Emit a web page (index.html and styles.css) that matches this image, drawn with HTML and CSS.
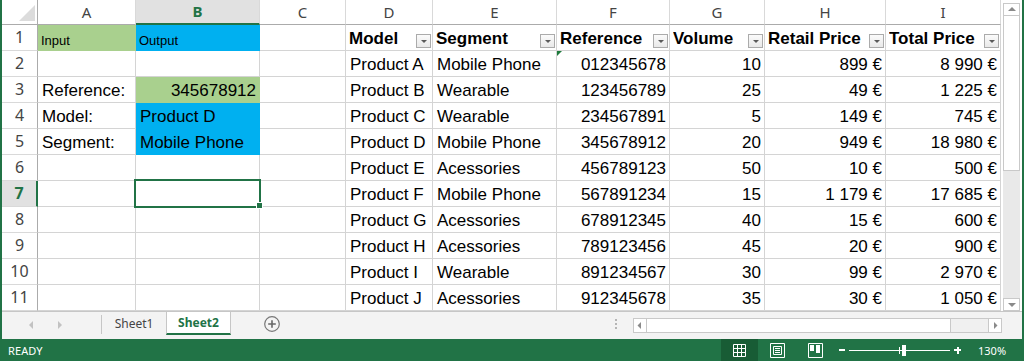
FILE: index.html
```html
<!DOCTYPE html>
<html lang="en">
<head>
<meta charset="utf-8">
<title>Sheet2 - Excel</title>
<link rel="stylesheet" href="styles.css">
</head>
<body>
<div class="app">
  <div class="main">
    <div class="grid">
      <div class="corner"><svg width="36" height="24" viewBox="0 0 36 24"><polygon points="17,21 33,5 33,21" fill="#dcdcdc"/></svg></div>
      <div class="ch">A</div><div class="ch csel">B</div><div class="ch">C</div><div class="ch">D</div><div class="ch">E</div><div class="ch">F</div><div class="ch">G</div><div class="ch">H</div><div class="ch">I</div>

      <div class="rh">1</div><div class="c g sm">Input</div><div class="c bl sm">Output</div><div class="c"></div>
      <div class="c th"><span>Model</span><i class="dd"></i></div><div class="c th"><span>Segment</span><i class="dd"></i></div><div class="c th"><span>Reference</span><i class="dd"></i></div><div class="c th"><span>Volume</span><i class="dd"></i></div><div class="c th"><span>Retail Price</span><i class="dd"></i></div><div class="c th"><span>Total Price</span><i class="dd"></i></div>

      <div class="rh">2</div><div class="c"></div><div class="c"></div><div class="c"></div>
      <div class="c">Product A</div><div class="c">Mobile Phone</div><div class="c r flag">012345678</div><div class="c r">10</div><div class="c r">899 €</div><div class="c r">8 990 €</div>

      <div class="rh">3</div><div class="c">Reference:</div><div class="c g r">345678912</div><div class="c"></div>
      <div class="c">Product B</div><div class="c">Wearable</div><div class="c r">123456789</div><div class="c r">25</div><div class="c r">49 €</div><div class="c r">1 225 €</div>

      <div class="rh">4</div><div class="c">Model:</div><div class="c bl">Product D</div><div class="c"></div>
      <div class="c">Product C</div><div class="c">Wearable</div><div class="c r">234567891</div><div class="c r">5</div><div class="c r">149 €</div><div class="c r">745 €</div>

      <div class="rh">5</div><div class="c">Segment:</div><div class="c bl">Mobile Phone</div><div class="c"></div>
      <div class="c">Product D</div><div class="c">Mobile Phone</div><div class="c r">345678912</div><div class="c r">20</div><div class="c r">949 €</div><div class="c r">18 980 €</div>

      <div class="rh">6</div><div class="c"></div><div class="c"></div><div class="c"></div>
      <div class="c">Product E</div><div class="c">Acessories</div><div class="c r">456789123</div><div class="c r">50</div><div class="c r">10 €</div><div class="c r">500 €</div>

      <div class="rh rsel">7</div><div class="c"></div><div class="c"></div><div class="c"></div>
      <div class="c">Product F</div><div class="c">Mobile Phone</div><div class="c r">567891234</div><div class="c r">15</div><div class="c r">1 179 €</div><div class="c r">17 685 €</div>

      <div class="rh">8</div><div class="c"></div><div class="c"></div><div class="c"></div>
      <div class="c">Product G</div><div class="c">Acessories</div><div class="c r">678912345</div><div class="c r">40</div><div class="c r">15 €</div><div class="c r">600 €</div>

      <div class="rh">9</div><div class="c"></div><div class="c"></div><div class="c"></div>
      <div class="c">Product H</div><div class="c">Acessories</div><div class="c r">789123456</div><div class="c r">45</div><div class="c r">20 €</div><div class="c r">900 €</div>

      <div class="rh">10</div><div class="c"></div><div class="c"></div><div class="c"></div>
      <div class="c">Product I</div><div class="c">Wearable</div><div class="c r">891234567</div><div class="c r">30</div><div class="c r">99 €</div><div class="c r">2 970 €</div>

      <div class="rh">11</div><div class="c"></div><div class="c"></div><div class="c"></div>
      <div class="c">Product J</div><div class="c">Acessories</div><div class="c r">912345678</div><div class="c r">35</div><div class="c r">30 €</div><div class="c r">1 050 €</div>

      <div class="selection"></div>
      <div class="handle"></div>
    </div>
    <div class="vscroll">
      <div class="vbar">
        <div class="sbtn"><svg width="16" height="11" viewBox="0 0 16 11"><polygon points="4,7 12,7 8,3" fill="#8a8a8a"/></svg></div>
        <div class="vthumb"></div>
        <div class="vtrack"></div>
        <div class="sbtn"><svg width="16" height="11" viewBox="0 0 16 11"><polygon points="4,4 12,4 8,8" fill="#8a8a8a"/></svg></div>
      </div>
    </div>
  </div>

  <div class="tabbar">
    <div class="nav">
      <svg width="99" height="26" viewBox="0 0 99 26"><polygon points="31,9 31,17 27,13" fill="#c2c2c2"/><polygon points="56,9 56,17 60,13" fill="#c2c2c2"/></svg>
    </div>
    <div class="tsep"></div>
    <div class="tab">Sheet1</div>
    <div class="tab active">Sheet2</div>
    <div class="addsheet"><svg width="16" height="16" viewBox="0 0 16 16"><circle cx="8" cy="8" r="7.3" fill="none" stroke="#777" stroke-width="1.2"/><path d="M8 4.2v7.6M4.2 8h7.6" stroke="#666" stroke-width="1.6"/></svg></div>
    <div class="spacer"></div>
    <div class="dots"><i></i><i></i><i></i></div>
    <div class="hbar">
      <div class="hbtn"><svg width="12" height="13" viewBox="0 0 12 13"><polygon points="7,3 7,10 3.5,6.5" fill="#8a8a8a"/></svg></div>
      <div class="hthumb"></div>
      <div class="htrack"></div>
      <div class="hbtn"><svg width="12" height="13" viewBox="0 0 12 13"><polygon points="5,3 5,10 8.5,6.5" fill="#8a8a8a"/></svg></div>
    </div>
  </div>

  <div class="status">
    <div class="ready">READY</div>
    <div class="right">
      <div class="vbtn on"><svg width="15" height="15" viewBox="0 0 15 15"><path d="M1.5 1.5h12v12h-12zM5.5 1.5v12M9.5 1.5v12M1.5 5.5h12M1.5 9.5h12" fill="none" stroke="#fff" stroke-width="1"/></svg></div>
      <div class="vbtn w2"><svg width="15" height="15" viewBox="0 0 15 15"><path d="M0.5 0.5h14v14h-14z M3.5 3.5h8v8h-8z M5 5.5h5M5 7.5h5M5 9.5h5" fill="none" stroke="#fff" stroke-width="1"/></svg></div>
      <div class="vbtn w3"><svg width="15" height="15" viewBox="0 0 15 15"><path d="M0.5 0.5h14v14h-14z" fill="none" stroke="#fff" stroke-width="1"/><rect x="2" y="2" width="4" height="6" fill="#fff"/><rect x="8" y="2" width="4" height="8" fill="#fff"/></svg></div>
      <div class="zminus"></div>
      <div class="slider"><i class="tick"></i><i class="knob"></i></div>
      <div class="zplus"></div>
      <div class="zpct">130%</div>
    </div>
  </div>
</div>
</body>
</html>
```

FILE: styles.css
```css
* { box-sizing: border-box; margin: 0; padding: 0; }
html, body { width: 1024px; height: 361px; overflow: hidden; background: #fff; }
body { font-family: "Liberation Sans", Arial, sans-serif; color: #000; }

.app {
  width: 1024px; height: 361px;
  display: flex; flex-direction: column;
  border-left: 2px solid #217346; border-right: 2px solid #217346;
}

.main { display: flex; height: 311px; }

.grid {
  position: relative;
  display: grid;
  grid-template-columns: 36px 98px 124px 86px 87px 124px 113px 95px 121px 115px;
  grid-template-rows: 25px repeat(11, 26px);
  width: 999px;
}

.corner {
  border-right: 1px solid #ababab; border-bottom: 1px solid #ababab;
}
.corner svg { display: block; }

.ch {
  font-family: "Noto Sans", "Open Sans", sans-serif;
  font-size: 15px; line-height: 24px; color: #444; text-align: center;
  border-right: 1px solid #d9d9d9; border-bottom: 1px solid #ababab;
}
.ch.csel {
  background: #e1e1e1; color: #217346; font-weight: bold;
  border-bottom: 2px solid #217346; line-height: 23px;
}

.rh {
  font-family: "Noto Sans", "Open Sans", sans-serif;
  font-size: 16px; line-height: 25px; color: #444; text-align: center;
  border-right: 1px solid #ababab; border-bottom: 1px solid #d9d9d9;
}
.rh.rsel {
  background: #e1e1e1; color: #217346; font-weight: bold;
  border-right: 2px solid #217346;
}

.c {
  position: relative;
  font-size: 17px; line-height: 25px; padding: 1px 3px 0 4px;
  white-space: nowrap; overflow: hidden;
  border-right: 1px solid #d4d4d4; border-bottom: 1px solid #d4d4d4;
}
.c.r { text-align: right; padding-left: 3px; padding-right: 3px; }
.c.sm { font-size: 13px; padding-top: 3px; padding-left: 3px; }
.c.g { background: #a9d08e; border-color: #a9d08e; }
.c.bl { background: #00b0f0; border-color: #00b0f0; }

.c.th { font-weight: bold; display: flex; align-items: flex-start; padding-left: 3px; padding-right: 1px; overflow: visible; }
.c.th span { flex: 1; overflow: hidden; }
.dd {
  flex: none; width: 15px; height: 14px; margin-top: 8px;
  border: 1px solid #ababab;
  background: linear-gradient(#fbfbfb, #e9e9e9);
  position: relative;
}
.dd::after {
  content: ""; position: absolute; left: 4px; top: 5px;
  border-left: 3px solid transparent; border-right: 3px solid transparent;
  border-top: 3px solid #5a5a5a;
}

.c.flag::before {
  content: ""; position: absolute; left: 0; top: 0;
  border-top: 5px solid #1e7b3c; border-right: 5px solid transparent;
}

.selection {
  position: absolute; left: 132px; top: 179px; width: 127px; height: 29px;
  border: 2px solid #217346; pointer-events: none;
}
.handle {
  position: absolute; left: 254px; top: 202px; width: 7px; height: 7px;
  background: #217346; border: 1px solid #fff;
}

.vscroll { width: 21px; padding: 3px 1px 0 2px; background: #fff; }
.vbar { display: flex; flex-direction: column; height: 100%; width: 17px; }
.sbtn { height: 13px; border: 1px solid #c9c9c9; background: #fff; flex: none; }
.sbtn svg { display: block; margin-left: 0; }
.vthumb { height: 155px; background: #fff; border: 1px solid #c9c9c9; border-top: none; flex: none; }
.vtrack { flex: 1; background: #e9e9e9; }

.tabbar {
  height: 28px; display: flex; align-items: flex-start;
  background: #f3f3f3; border-top: 1px solid #c6c6c6;
  font-family: "Noto Sans", "Open Sans", sans-serif; font-size: 12px;
}
.nav { width: 99px; height: 26px; }
.nav svg { display: block; }
.tsep { width: 1px; height: 19px; margin-top: 3px; background: #c6c6c6; }
.tab {
  width: 64px; height: 23px; line-height: 23px; text-align: center; color: #444;
}
.tab.active {
  width: 65px; background: #fff; color: #217346; font-weight: bold;
  border-left: 1px solid #c6c6c6; border-right: 1px solid #c6c6c6;
  border-bottom: 2px solid #217346; line-height: 21px;
}
.addsheet { margin-left: 33px; margin-top: 4px; width: 16px; height: 16px; }
.addsheet svg { display: block; }
.spacer { flex: 1; }
.dots { width: 3px; margin-top: 7px; margin-right: 15px; display: flex; flex-direction: column; gap: 2px; }
.dots i { display: block; width: 2px; height: 2px; background: #b5b5b5; }
.hbar { width: 369px; height: 15px; margin-top: 6px; margin-right: 20px; display: flex; }
.hbtn { width: 14px; height: 15px; border: 1px solid #c9c9c9; background: #fff; flex: none; }
.hbtn svg { display: block; }
.hthumb { width: 304px; height: 15px; background: #fff; border: 1px solid #c9c9c9; border-left: none; flex: none; }
.htrack { flex: 1; background: #f0f0f0; border-top: 1px solid #c9c9c9; border-bottom: 1px solid #c9c9c9; }

.status {
  height: 22px; background: #217346; color: #fff; display: flex; align-items: center;
  font-family: "Noto Sans", "Open Sans", sans-serif; font-size: 11px;
  padding-right: 16px;
}
.ready { padding-left: 6px; letter-spacing: 0.1px; }
.right { margin-left: auto; display: flex; align-items: center; height: 22px; }
.vbtn { width: 37px; height: 22px; display: flex; align-items: center; justify-content: center; }
.vbtn.on { background: #185c35; }
.vbtn.w2 { width: 38px; }
.vbtn.w3 { width: 39px; }
.vbtn svg { display: block; }
.zminus { width: 6px; height: 2px; background: #fff; margin-left: 4px; }
.slider { position: relative; width: 101px; height: 1px; background: #fff; margin-left: 4px; }
.slider .tick { position: absolute; left: 50px; top: -3px; width: 1px; height: 7px; background: #fff; }
.slider .knob { position: absolute; left: 53px; top: -5px; width: 4px; height: 11px; background: #fff; }
.zplus { position: relative; width: 7px; height: 7px; margin-left: 4px; }
.zplus::before { content: ""; position: absolute; left: 0; top: 2.5px; width: 7px; height: 2px; background: #fff; }
.zplus::after { content: ""; position: absolute; left: 2.5px; top: 0; width: 2px; height: 7px; background: #fff; }
.zpct { width: 28px; margin-left: 17px; }
```
